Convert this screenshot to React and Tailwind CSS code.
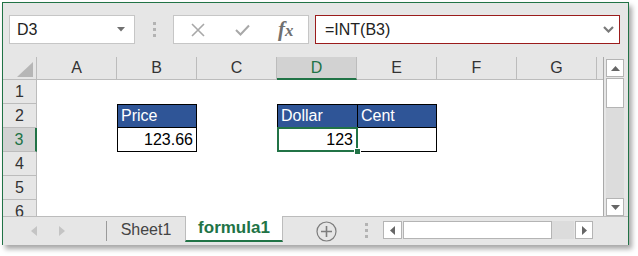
import React from 'react';

const cols = ['A', 'B', 'C', 'D', 'E', 'F', 'G'];

function Dots() {
    return (
        <div className="flex flex-col gap-[3px]">
            <span className="w-[3px] h-[3px] bg-[#b3b3b3]" />
            <span className="w-[3px] h-[3px] bg-[#b3b3b3]" />
            <span className="w-[3px] h-[3px] bg-[#b3b3b3]" />
        </div>
    );
}

function Toolbar() {
    return (
        <div className="h-[54px] flex items-start pt-[12px] pl-[6px]">
            {/* Name box */}
            <div className="w-[126px] h-[29px] bg-white border border-[#c6c6c6] flex items-center justify-between pl-[7px] pr-[9px]">
                <span className="text-[16px] text-[#222]">D3</span>
                <svg width="8" height="5" viewBox="0 0 8 5">
                    <path d="M0 0 L8 0 L4 4.5 Z" fill="#707070" />
                </svg>
            </div>
            <div className="w-[38px] h-[29px] flex items-center justify-center">
                <Dots />
            </div>
            {/* cancel / enter / fx */}
            <div className="w-[136px] h-[29px] bg-white border border-[#c6c6c6] flex items-center">
                <svg className="ml-[17px]" width="14" height="14" viewBox="0 0 14 14">
                    <path d="M1 1 L13 13 M13 1 L1 13" stroke="#a8a8a8" strokeWidth="1.6" fill="none" />
                </svg>
                <svg className="ml-[30px]" width="15" height="12" viewBox="0 0 15 12">
                    <path d="M1 6 L5.5 10.5 L14 1.5" stroke="#a8a8a8" strokeWidth="2" fill="none" />
                </svg>
                <span className="ml-[28px] font-['Liberation_Serif',serif] italic font-bold text-[21px] leading-none text-[#707070]">
                    f<span className="text-[17px]">x</span>
                </span>
            </div>
            {/* Formula bar */}
            <div className="ml-[6px] w-[305px] h-[29px] bg-white border border-[#9b1c1c] flex items-center justify-between pl-[9px] pr-[5px]">
                <span className="text-[16px] text-[#222]">=INT(B3)</span>
                <svg width="11" height="7" viewBox="0 0 11 7">
                    <path d="M1 1 L5.5 5.5 L10 1" stroke="#7a7a7a" strokeWidth="2.2" fill="none" />
                </svg>
            </div>
        </div>
    );
}

function ColumnHeaders() {
    return (
        <div className="flex h-[23px] bg-[#e6e6e6] border-b border-[#bcbcbc]">
            <div className="w-[34px] border-r border-[#bcbcbc] flex items-end justify-end pr-[3px] pb-[2px]">
                <svg width="16" height="15" viewBox="0 0 16 15">
                    <path d="M16 0 L16 15 L0 15 Z" fill="#b6b6b6" />
                </svg>
            </div>
            {cols.map((c) => (
                <div
                    key={c}
                    className={
                        c === 'D'
                            ? 'w-[80px] -mb-px border-r border-[#bcbcbc] bg-[#d2d2d2] border-b-2 border-b-[#217346] text-[#217346] flex items-center justify-center text-[16px]'
                            : 'w-[80px] border-r border-[#bcbcbc] text-[#333] flex items-center justify-center text-[16px]'
                    }
                >
                    {c}
                </div>
            ))}
            <div className="flex-1" />
        </div>
    );
}

function Cell({ className = '', children }) {
    return <div className={`w-[80px] h-full flex items-center ${className}`}>{children}</div>;
}

function Row({ n, children }) {
    const active = n === 3;
    return (
        <div className="flex h-[24px] shrink-0">
            <div
                className={
                    active
                        ? 'w-[34px] h-full bg-[#d2d2d2] border-b border-[#bcbcbc] border-r-2 border-r-[#217346] text-[#217346] flex items-center justify-center text-[16px]'
                        : 'w-[34px] h-full bg-[#e6e6e6] border-b border-r border-[#bcbcbc] text-[#333] flex items-center justify-center text-[16px]'
                }
            >
                {n}
            </div>
            {children}
        </div>
    );
}

function Sheet() {
    return (
        <div className="w-[601px] h-full bg-white border-r border-[#a9a9a9] flex flex-col overflow-hidden">
            <ColumnHeaders />
            <Row n={1} />
            <Row n={2}>
                <Cell />
                <Cell className="bg-[#2f5597] border border-black text-white text-[16px] pl-[3px]">Price</Cell>
                <Cell />
                <Cell className="bg-[#2f5597] border-y border-l border-black text-white text-[16px] pl-[3px]">Dollar</Cell>
                <Cell className="bg-[#2f5597] border border-black text-white text-[16px] pl-[3px]">Cent</Cell>
            </Row>
            <Row n={3}>
                <Cell />
                <Cell className="border-x border-b border-black justify-end pr-[3px] text-[16px] text-black">123.66</Cell>
                <Cell />
                <Cell className="relative border-l border-b border-black justify-end pr-[4px] text-[16px] text-black">
                    123
                    <div className="absolute -inset-px border-2 border-[#217346]" />
                    <div className="absolute -right-[4px] -bottom-[4px] w-[7px] h-[7px] bg-[#217346] border border-white" />
                </Cell>
                <Cell className="border-x border-b border-black" />
            </Row>
            <Row n={4} />
            <Row n={5} />
            <Row n={6} />
        </div>
    );
}

function VScroll() {
    return (
        <div className="ml-[2px] w-[18px] h-full pt-[2px] flex flex-col bg-[#e6e6e6]">
            <div className="h-[18px] bg-white border border-[#b4b4b4] flex items-center justify-center">
                <svg width="9" height="5" viewBox="0 0 9 5">
                    <path d="M0 5 L9 5 L4.5 0 Z" fill="#666" />
                </svg>
            </div>
            <div className="mt-px h-[30px] bg-white border border-[#b4b4b4]" />
            <div className="flex-1 bg-[#dcdcdc]" />
            <div className="h-[18px] bg-white border border-[#b4b4b4] flex items-center justify-center">
                <svg width="9" height="5" viewBox="0 0 9 5">
                    <path d="M0 0 L9 0 L4.5 5 Z" fill="#666" />
                </svg>
            </div>
        </div>
    );
}

function TabBar() {
    return (
        <div className="h-[29px] border-t border-[#bcbcbc] flex items-start">
            <div className="w-[103px] h-[28px] flex items-center">
                <svg className="ml-[28px]" width="6" height="10" viewBox="0 0 6 10">
                    <path d="M6 0 L6 10 L0 5 Z" fill="#c4c4c4" />
                </svg>
                <svg className="ml-[22px]" width="6" height="10" viewBox="0 0 6 10">
                    <path d="M0 0 L0 10 L6 5 Z" fill="#c4c4c4" />
                </svg>
            </div>
            <div className="mt-[4px] w-px h-[20px] bg-[#9a9a9a]" />
            <div className="w-[78px] h-[25px] flex items-center justify-center text-[16px] text-[#444]">Sheet1</div>
            <div className="-mt-px w-[98px] h-[26px] bg-white border-x border-[#bcbcbc] border-b-2 border-b-[#217346] flex items-center justify-center text-[17px] font-bold text-[#217346]">
                formula1
            </div>
            <div className="ml-[33px] mt-[4px]">
                <svg width="21" height="21" viewBox="0 0 21 21">
                    <circle cx="10.5" cy="10.5" r="9.5" stroke="#7d7d7d" strokeWidth="1.2" fill="none" />
                    <path d="M10.5 5 L10.5 16 M5 10.5 L16 10.5" stroke="#7d7d7d" strokeWidth="1.6" />
                </svg>
            </div>
            <div className="ml-[28px] mt-[6px]">
                <Dots />
            </div>
            {/* horizontal scroll */}
            <div className="ml-[15px] mt-[4px] flex h-[18px]">
                <div className="w-[19px] h-full bg-white border border-[#b4b4b4] flex items-center justify-center">
                    <svg width="5" height="9" viewBox="0 0 5 9">
                        <path d="M5 0 L5 9 L0 4.5 Z" fill="#666" />
                    </svg>
                </div>
                <div className="ml-px w-[149px] h-full bg-white border border-[#b4b4b4]" />
                <div className="w-[22px] h-full bg-[#dcdcdc]" />
                <div className="ml-px w-[18px] h-full bg-white border border-[#b4b4b4] flex items-center justify-center">
                    <svg width="5" height="9" viewBox="0 0 5 9">
                        <path d="M0 0 L0 9 L5 4.5 Z" fill="#666" />
                    </svg>
                </div>
            </div>
        </div>
    );
}

export default function App() {
    return (
        <div className="w-[638px] h-[256px] bg-white pt-[2px] pl-[2px] font-['Liberation_Sans',Arial,sans-serif]">
            <div className="w-[627px] h-[243px] bg-[#e6e6e6] border-x border-t border-[#217346] shadow-[3px_4px_5px_rgba(0,0,0,0.35)] flex flex-col">
                <Toolbar />
                <div className="flex h-[159px]">
                    <Sheet />
                    <VScroll />
                </div>
                <TabBar />
            </div>
        </div>
    );
}
